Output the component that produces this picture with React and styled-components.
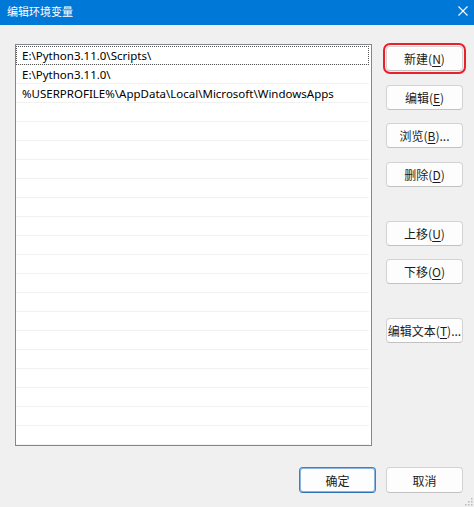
import React from "react";
import styled, { createGlobalStyle } from "styled-components";

const Global = createGlobalStyle`
  html, body { margin: 0; padding: 0; background: #f0f0f0; }
  * { box-sizing: border-box; }
`;

const Window = styled.div`
  position: relative;
  width: 474px;
  height: 507px;
  background: #f0f0f0;
  display: flex;
  flex-direction: column;
  font-family: "Segoe UI", "Noto Sans", "Noto Sans CJK SC", sans-serif;
  overflow: hidden;
`;

const TitleBar = styled.div`
  height: 25px;
  flex: none;
  background: #0078d7;
  display: flex;
  align-items: center;
  justify-content: space-between;
  padding: 0 6px 0 7px;
`;

const Title = styled.div`
  color: #ffffff;
  font-family: "Noto Sans CJK SC", sans-serif;
  font-size: 11px;
  line-height: 1;
  margin-top: -3px;
`;

const Close = styled.div`
  width: 10px;
  height: 10px;
  display: flex;
  margin-top: -3px;
`;

const Body = styled.div`
  flex: 1;
  display: flex;
  flex-direction: column;
  padding: 19px 11px 0 15px;
`;

const Main = styled.div`
  display: grid;
  grid-template-columns: 357px 77px;
  column-gap: 14px;
`;

const List = styled.div`
  height: 402px;
  border: 1px solid #828790;
  background: #ffffff;
  padding-top: 1px;
  overflow: hidden;
`;

const Row = styled.div`
  height: 19px;
  line-height: 19px;
  padding-left: 6px;
  font-size: 11.5px;
  color: #000000;
  border-bottom: 1px solid #f1f1f1;
  white-space: nowrap;
  outline: ${(p) => (p.focused ? "1px dotted #555" : "none")};
  outline-offset: -1px;
  margin-right: 2px;
`;

const Side = styled.div`
  display: flex;
  flex-direction: column;
  gap: 13.5px;
  padding-top: 2px;
`;

const Button = styled.button`
  width: 77px;
  height: ${(p) => (p.tall ? "26px" : "25px")};
  margin-top: ${(p) => (p.spaced ? "20.5px" : "0")};
  background: #fdfdfd;
  border: 1px solid ${(p) => (p.primary ? "#3c7fc6" : "#d3d3d3")};
  border-bottom-color: ${(p) => (p.primary ? "#2f6fb4" : "#c2c2c2")};
  border-radius: 4px;
  font-family: "Noto Sans CJK SC", sans-serif;
  font-size: 12px;
  color: #1b1b1b;
  padding: 0;
  display: flex;
  align-items: center;
  justify-content: center;
  outline: ${(p) => (p.highlight ? "2px solid #e8202a" : "none")};
  outline-offset: 1px;
  box-shadow: ${(p) => (p.primary ? "inset 0 0 0 1px #8bb4e0" : "none")};
  cursor: default;
`;

const Key = styled.span`
  text-decoration: underline;
  text-underline-offset: 2px;
`;

const Footer = styled.div`
  display: flex;
  justify-content: flex-end;
  gap: 10px;
  margin-top: 21px;
`;

const Grip = styled.div`
  position: absolute;
  right: 1px;
  bottom: 1px;
  width: 8px;
  height: 8px;
  display: flex;
`;

const items = [
  "E:\\Python3.11.0\\Scripts\\",
  "E:\\Python3.11.0\\",
  "%USERPROFILE%\\AppData\\Local\\Microsoft\\WindowsApps",
];

const rows = Array.from({ length: 21 }, (_, i) => items[i] || "");

function Label({ text, k, suffix = "" }) {
  return (
    <span>
      {text}
      {k ? (
        <>
          (<Key>{k}</Key>){suffix}
        </>
      ) : null}
    </span>
  );
}

export default function App() {
  return (
    <>
      <Global />
      <Window>
        <TitleBar>
          <Title>编辑环境变量</Title>
          <Close>
            <svg width="10" height="10" viewBox="0 0 10 10">
              <path d="M0.5 0.5 L9.5 9.5 M9.5 0.5 L0.5 9.5" stroke="#ffffff" strokeWidth="1.1" fill="none" />
            </svg>
          </Close>
        </TitleBar>
        <Body>
          <Main>
            <List>
              {rows.map((t, i) => (
                <Row key={i} focused={i === 0}>
                  {t}
                </Row>
              ))}
            </List>
            <Side>
              <Button highlight>
                <Label text="新建" k="N" />
              </Button>
              <Button>
                <Label text="编辑" k="E" />
              </Button>
              <Button>
                <Label text="浏览" k="B" suffix="..." />
              </Button>
              <Button>
                <Label text="删除" k="D" />
              </Button>
              <Button spaced>
                <Label text="上移" k="U" />
              </Button>
              <Button>
                <Label text="下移" k="O" />
              </Button>
              <Button spaced>
                <Label text="编辑文本" k="T" suffix="..." />
              </Button>
            </Side>
          </Main>
          <Footer>
            <Button primary tall>
              确定
            </Button>
            <Button tall>取消</Button>
          </Footer>
        </Body>
        <Grip>
          <svg width="8" height="8" viewBox="0 0 8 8">
            <rect x="6" y="0" width="1.5" height="1.5" fill="#b8b8b8" />
            <rect x="3" y="3" width="1.5" height="1.5" fill="#b8b8b8" />
            <rect x="6" y="3" width="1.5" height="1.5" fill="#b8b8b8" />
            <rect x="0" y="6" width="1.5" height="1.5" fill="#b8b8b8" />
            <rect x="3" y="6" width="1.5" height="1.5" fill="#b8b8b8" />
            <rect x="6" y="6" width="1.5" height="1.5" fill="#b8b8b8" />
          </svg>
        </Grip>
      </Window>
    </>
  );
}
